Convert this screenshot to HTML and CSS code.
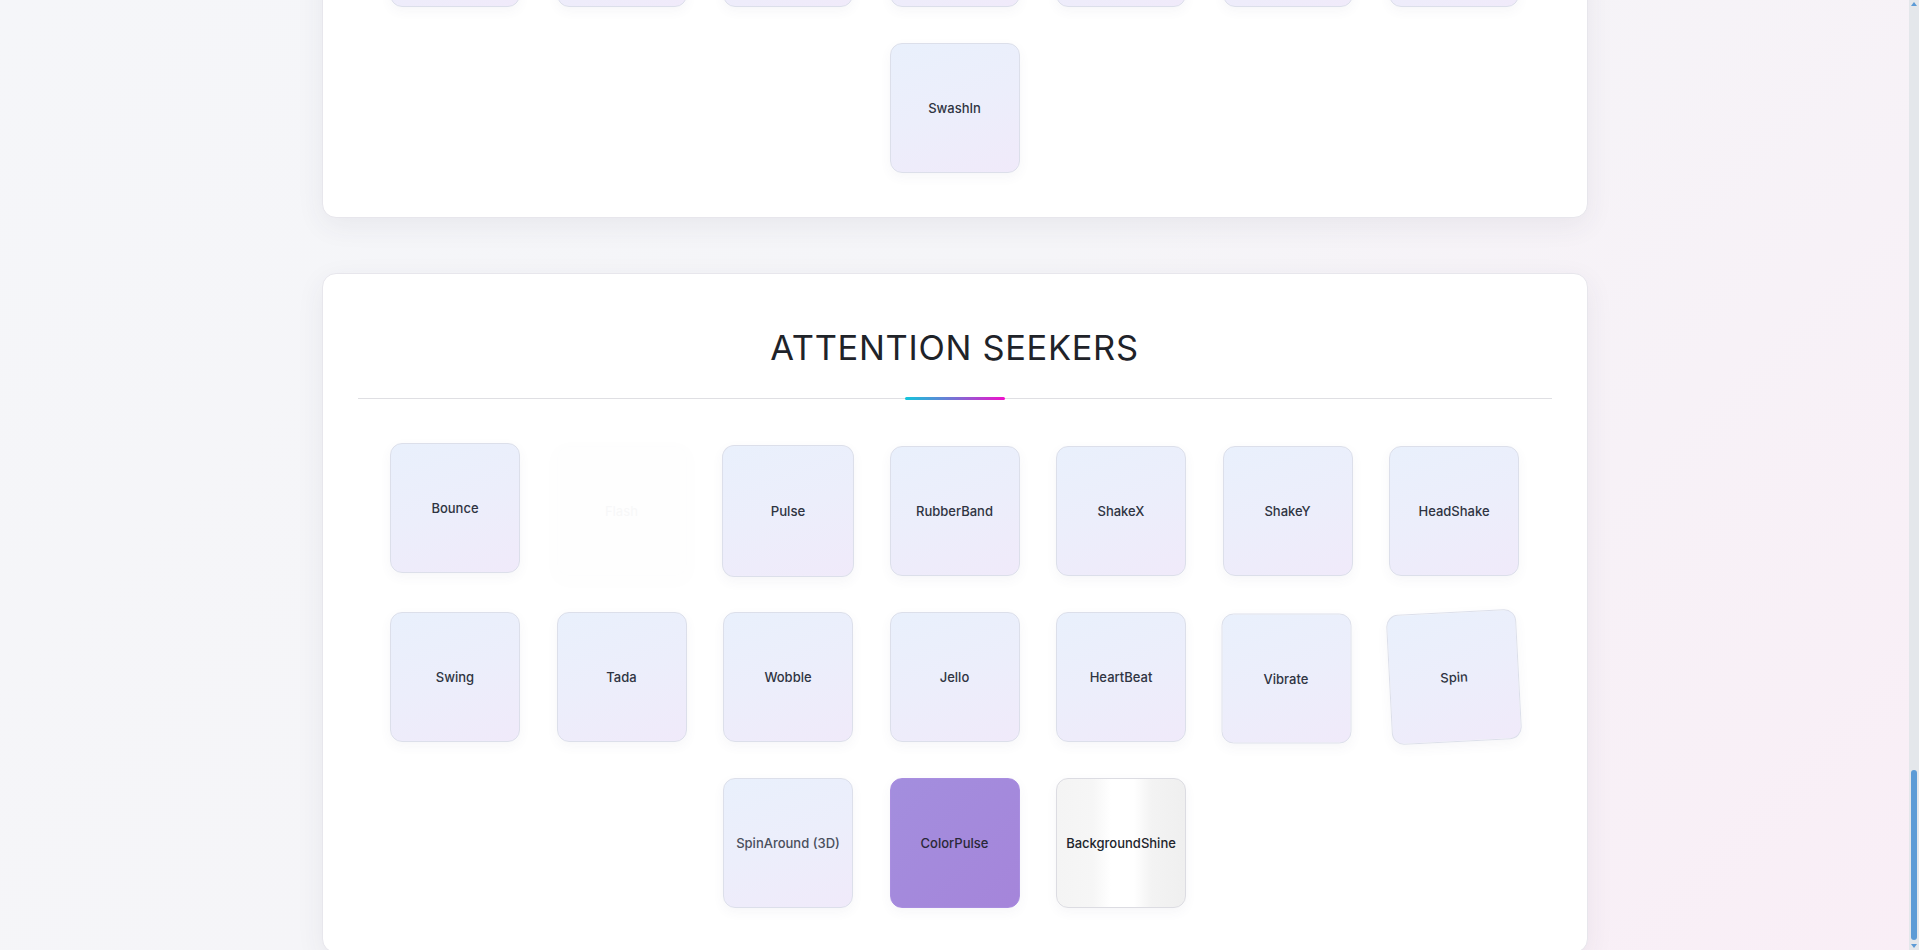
FILE: index.html
```html
<!DOCTYPE html>
<html lang="en">
<head>
<meta charset="utf-8">
<title>Animation Gallery</title>
<link rel="stylesheet" href="styles.css">
</head>
<body>
<main class="page">

  <section class="section">
    <h2 class="section-title">Fading Entrances</h2>
    <div class="grid">
      <div class="item">FadeIn</div><div class="item">FadeInDown</div><div class="item">FadeInDownBig</div><div class="item">FadeInLeft</div><div class="item">FadeInLeftBig</div><div class="item">FadeInRight</div><div class="item">FadeInRightBig</div>
      <div class="item">FadeInUp</div><div class="item">FadeInUpBig</div><div class="item">FadeInTopLeft</div><div class="item">FadeInTopRight</div><div class="item">FadeInBottomLeft</div><div class="item">FadeInBottomRight</div>
    </div>
  </section>

  <section class="section">
    <h2 class="section-title">Bouncing &amp; Back Entrances</h2>
    <div class="grid">
      <div class="item">BounceIn</div><div class="item">BounceInDown</div><div class="item">BounceInLeft</div><div class="item">BounceInRight</div><div class="item">BounceInUp</div><div class="item">BackInDown</div><div class="item">BackInLeft</div>
      <div class="item">BackInRight</div><div class="item">BackInUp</div>
    </div>
  </section>

  <section class="section">
    <h2 class="section-title">Zooming &amp; Sliding Entrances</h2>
    <div class="grid">
      <div class="item">ZoomIn</div><div class="item">ZoomInDown</div><div class="item">ZoomInLeft</div><div class="item">ZoomInRight</div><div class="item">ZoomInUp</div><div class="item">SlideInDown</div><div class="item">SlideInLeft</div>
      <div class="item">SlideInRight</div><div class="item">SlideInUp</div>
    </div>
  </section>

  <section class="section">
    <h2 class="section-title">Rotating &amp; Flipping Entrances</h2>
    <div class="grid">
      <div class="item">RotateIn</div><div class="item">RotateInDownLeft</div><div class="item">RotateInDownRight</div><div class="item">RotateInUpLeft</div><div class="item">RotateInUpRight</div><div class="item">FlipInX</div><div class="item">FlipInY</div>
      <div class="item">LightSpeedInLeft</div><div class="item">LightSpeedInRight</div>
    </div>
  </section>

  <section class="section">
    <h2 class="section-title">Specials</h2>
    <div class="grid">
      <div class="item">Hinge</div><div class="item">JackInTheBox</div><div class="item">RollIn</div><div class="item">Flip</div>
    </div>
  </section>

  <section class="section">
    <h2 class="section-title">Magic Entrances</h2>
    <div class="grid">
      <div class="item">PuffIn</div><div class="item">VanishIn</div><div class="item">TwisterInDown</div><div class="item">TwisterInUp</div><div class="item">SpaceInUp</div><div class="item">SpaceInDown</div><div class="item">SpaceInLeft</div>
      <div class="item">SpaceInRight</div><div class="item">TinUpIn</div><div class="item">TinDownIn</div><div class="item">TinLeftIn</div><div class="item">TinRightIn</div><div class="item">BoingInUp</div><div class="item">Swap</div>
      <div class="item">SwashIn</div>
    </div>
  </section>

  <section class="section">
    <h2 class="section-title">Attention Seekers</h2>
    <div class="grid">
      <div class="item item--bounce">Bounce</div>
      <div class="item item--flash">Flash</div>
      <div class="item item--pulse">Pulse</div>
      <div class="item">RubberBand</div>
      <div class="item">ShakeX</div>
      <div class="item">ShakeY</div>
      <div class="item">HeadShake</div>
      <div class="item">Swing</div>
      <div class="item">Tada</div>
      <div class="item">Wobble</div>
      <div class="item">Jello</div>
      <div class="item">HeartBeat</div>
      <div class="item item--vibrate">Vibrate</div>
      <div class="item item--spin">Spin</div>
      <div class="item item--spinaround">SpinAround (3D)</div>
      <div class="item item--colorpulse">ColorPulse</div>
      <div class="item item--shine">BackgroundShine</div>
    </div>
  </section>

</main>

<div class="scrollbar" aria-hidden="true">
  <span class="scrollbar-arrow scrollbar-arrow--up"></span>
  <span class="scrollbar-thumb"></span>
  <span class="scrollbar-arrow scrollbar-arrow--down"></span>
</div>

<script src="script.js"></script>
</body>
</html>
```

FILE: styles.css
```css
html {
  scrollbar-width: none;
}

html::-webkit-scrollbar {
  display: none;
}

body {
  margin: 0 10px 0 0;
  font-family: Inter, "Noto Sans", "Liberation Sans", sans-serif;
  color: #2d3240;
  background: linear-gradient(135deg, #f5f6f9 0%, #f5f5f8 45%, #f9eef6 100%) fixed;
}

.page {
  padding: 40px 0 0;
}

.section {
  width: 1266px;
  box-sizing: border-box;
  margin: 0 auto 55px;
  padding: 53px 35px 44px;
  background: #ffffff;
  border: 1px solid #e7e6ec;
  border-radius: 14px;
  box-shadow: 0 8px 28px rgba(60, 50, 90, 0.07);
}

.section:last-child {
  margin-bottom: 0;
}

.section-title {
  position: relative;
  margin: 0 0 47px;
  padding-bottom: 29px;
  border-bottom: 1px solid #dfdfe3;
  text-align: center;
  font-size: 34.4px;
  line-height: 42px;
  font-weight: 400;
  letter-spacing: 0.7px;
  text-transform: uppercase;
  color: #1f2329;
}

.section-title::after {
  content: "";
  position: absolute;
  left: 50%;
  bottom: -2px;
  width: 100px;
  height: 3px;
  margin-left: -50px;
  border-radius: 2px;
  background: linear-gradient(90deg, #12c6dc 0%, #7a70d4 50%, #f10fcb 100%);
}

.grid {
  display: flex;
  flex-wrap: wrap;
  justify-content: center;
  gap: 36px 36.5px;
}

.item {
  width: 130px;
  height: 130px;
  box-sizing: border-box;
  display: flex;
  align-items: center;
  justify-content: center;
  text-align: center;
  border: 1px solid #dcdfea;
  border-radius: 12px;
  background: linear-gradient(160deg, #e9f0fc 0%, #eceefb 50%, #f0eafa 100%);
  box-shadow: 0 4px 12px rgba(70, 70, 110, 0.05);
  font-size: 13px;
  font-weight: 500;
  color: #2f3442;
}

.item--bounce {
  transform: translateY(-3px);
}

.item--flash {
  opacity: 0.03;
}

.item--pulse {
  transform: scale(1.015);
}

.item--vibrate {
  transform: translate(-1.5px, 1.5px);
}

.item--spin {
  transform: rotate(-3deg);
}

.item--spinaround {
  color: #4a4f5d;
}

.item--colorpulse {
  background: linear-gradient(135deg, #a38ede 0%, #a585da 100%);
  border-color: #a98ee0;
  color: #2a2838;
}

.item--shine {
  background: linear-gradient(90deg, #f4f4f4 0%, #f6f6f6 28%, #ffffff 42%, #ffffff 60%, #f3f3f3 74%, #efefef 100%);
  border-color: #dcdce2;
  color: #22252c;
}

/* scrollbar drawn over the right edge of the window */
.scrollbar {
  position: fixed;
  top: 0;
  right: 0;
  bottom: 0;
  width: 10px;
  display: flex;
  flex-direction: column;
  align-items: center;
  justify-content: space-between;
  background: #e4e7eb;
}

.scrollbar-thumb {
  margin-top: auto;
  margin-bottom: 4px;
  width: 6px;
  height: 170px;
  border-radius: 3px;
  background: #5c9bd6;
}

.scrollbar-arrow {
  width: 0;
  height: 0;
  border-left: 3px solid transparent;
  border-right: 3px solid transparent;
}

.scrollbar-arrow--up {
  margin-top: 2px;
  border-bottom: 4px solid #5c9bd6;
}

.scrollbar-arrow--down {
  margin-bottom: 2px;
  border-top: 4px solid #5c9bd6;
}
```

FILE: script.js
```js
function toBottom() {
  var max = document.documentElement.scrollHeight - window.innerHeight;
  window.scrollTo(0, Math.max(0, max - 3));
}
if ('scrollRestoration' in history) {
  history.scrollRestoration = 'manual';
}
toBottom();
window.addEventListener('load', toBottom);
```
